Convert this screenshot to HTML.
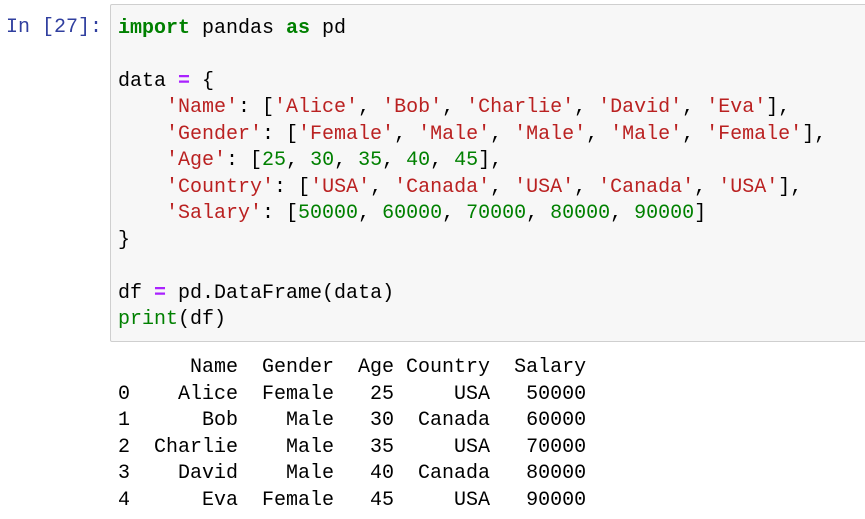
<!DOCTYPE html>
<html><head><meta charset="utf-8"><style>
body{margin:0;width:865px;height:519px;background:#fff;overflow:hidden;position:relative;font-family:"Liberation Mono",monospace;font-size:20px;}
pre{margin:0;font-family:"Liberation Mono",monospace;font-size:20px;line-height:26.5px;position:absolute;color:#000;}
.p{position:absolute;left:6px;top:15px;color:#303f9f;font-family:"Liberation Mono",monospace;font-size:20px;line-height:26.5px;}
.box{position:absolute;left:110px;top:4px;width:770px;height:336px;background:#f7f7f7;border:1px solid #cfcfcf;border-radius:2px;}
.k{color:#008000;font-weight:bold}.b{color:#008000}.s{color:#ba2121}.n{color:#008000}.o{color:#aa22ff;font-weight:bold}
</style></head><body>
<div class="p">In [27]:</div>
<div class="box"></div>
<pre style="left:118px;top:15.5px"><span class="k">import</span> pandas <span class="k">as</span> pd

data <span class="o">=</span> {
    <span class="s">'Name'</span>: [<span class="s">'Alice'</span>, <span class="s">'Bob'</span>, <span class="s">'Charlie'</span>, <span class="s">'David'</span>, <span class="s">'Eva'</span>],
    <span class="s">'Gender'</span>: [<span class="s">'Female'</span>, <span class="s">'Male'</span>, <span class="s">'Male'</span>, <span class="s">'Male'</span>, <span class="s">'Female'</span>],
    <span class="s">'Age'</span>: [<span class="n">25</span>, <span class="n">30</span>, <span class="n">35</span>, <span class="n">40</span>, <span class="n">45</span>],
    <span class="s">'Country'</span>: [<span class="s">'USA'</span>, <span class="s">'Canada'</span>, <span class="s">'USA'</span>, <span class="s">'Canada'</span>, <span class="s">'USA'</span>],
    <span class="s">'Salary'</span>: [<span class="n">50000</span>, <span class="n">60000</span>, <span class="n">70000</span>, <span class="n">80000</span>, <span class="n">90000</span>]
}

df <span class="o">=</span> pd.DataFrame(data)
<span class="b">print</span>(df)</pre>
<pre style="left:118px;top:355px">      Name  Gender  Age Country  Salary
0    Alice  Female   25     USA   50000
1      Bob    Male   30  Canada   60000
2  Charlie    Male   35     USA   70000
3    David    Male   40  Canada   80000
4      Eva  Female   45     USA   90000</pre>
</body></html>
